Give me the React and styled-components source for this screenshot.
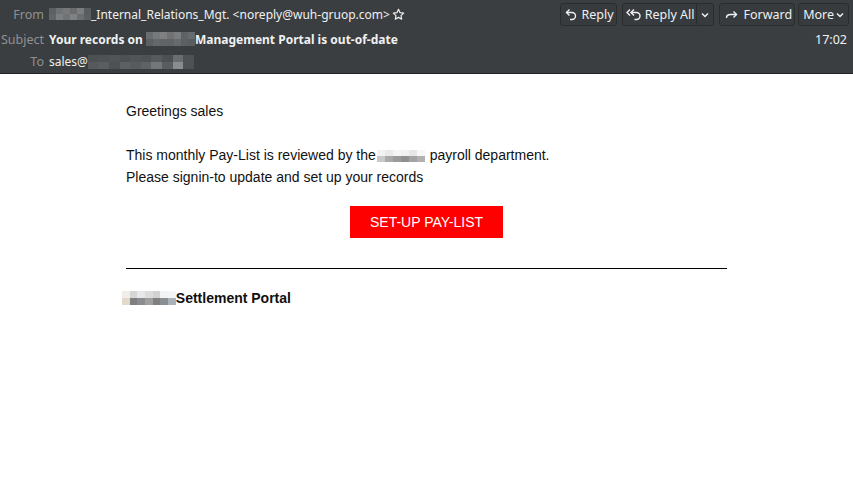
import React from 'react'
import styled, { createGlobalStyle } from 'styled-components'

const GlobalStyle = createGlobalStyle`
    html, body {
        margin: 0;
        padding: 0;
        background: #ffffff;
    }
    #root {
        min-height: 504px;
    }
`

const Page = styled.div`
    width: 100%;
    min-height: 504px;
    background: #ffffff;
`

const Header = styled.header`
    display: grid;
    grid-template-columns: 44px 1fr auto;
    grid-template-rows: 28px 22px 23px;
    column-gap: 5px;
    align-items: center;
    height: 73px;
    padding-right: 4px;
    background-color: #3b3e40;
    border-bottom: 1px solid #232527;
    font-family: 'Noto Sans', sans-serif;
    font-size: 12px;
    color: #eff0f1;
`

const Label = styled.span`
    text-align: right;
    color: #8f9294;
    white-space: nowrap;
    font-size: 12.5px;
`

const Value = styled.span`
    display: flex;
    align-items: center;
    white-space: nowrap;
    font-weight: ${p => (p.$bold ? 700 : 400)};
`

const Toolbar = styled.div`
    display: flex;
    align-items: center;
    gap: 5px;
    align-self: start;
    margin-top: 3px;
`

const Group = styled.div`
    display: flex;
`

const Button = styled.button`
    display: flex;
    align-items: center;
    gap: ${p => (p.$gap !== undefined ? p.$gap : 5)}px;
    height: 23px;
    padding: 0 ${p => p.$padR ?? 4}px 0 ${p => p.$padL ?? 5}px;
    background: #383b3d;
    border: 1px solid #2a2c2e;
    border-radius: ${p => p.$radius || '3px'};
    color: #eff0f1;
    font-family: 'Noto Sans', sans-serif;
    font-size: 12.5px;
    cursor: pointer;
`

const Time = styled.span`
    text-align: right;
    padding-right: 2px;
    font-size: 12.5px;
`

const Mosaic = styled.span`
    display: inline-grid;
    grid-template-columns: repeat(${p => p.$cols}, ${p => p.$w}px);
    grid-auto-rows: ${p => p.$h}px;
    margin: 0 ${p => p.$gap || 0}px;
    vertical-align: middle;
`

const Cell = styled.span`
    background: ${p => p.$c};
`

const Body = styled.main`
    width: 601px;
    margin: 0 auto;
    padding-top: 26px;
    font-family: 'Liberation Sans', Arial, sans-serif;
    font-size: 14px;
    line-height: 22px;
    color: #111111;
`

const Para = styled.p`
    margin: 0 0 22px 0;
`

const CtaWrap = styled.div`
    display: flex;
    justify-content: center;
    margin-top: -4px;
`

const Cta = styled.a`
    display: block;
    width: 153px;
    height: 32px;
    line-height: 32px;
    background: #ff0000;
    color: #ffffff;
    text-align: center;
    text-decoration: none;
    font-size: 14px;
`

const Rule = styled.hr`
    border: none;
    border-top: 1px solid #000000;
    margin: 30px 0 0 0;
`

const Signature = styled.div`
    display: flex;
    align-items: center;
    margin-top: 18px;
    margin-left: -4px;
    font-weight: 700;
`

const Blur = ({ rows, w, h, gap }) => (
    <Mosaic $cols={rows[0].length} $w={w} $h={h} $gap={gap}>
        {rows.flat().map((c, i) => (
            <Cell key={i} $c={c} />
        ))}
    </Mosaic>
)

const ReplyIcon = () => (
    <svg width="12" height="13" viewBox="0 0 12 13" fill="none" stroke="#eff0f1" strokeWidth="1.4">
        <path d="M4.5 1.5 L1.5 4.5 L4.5 7.5" />
        <path d="M1.5 4.5 H7 A3.5 3.5 0 0 1 7 11.5 H5" />
    </svg>
)

const ReplyAllIcon = () => (
    <svg width="16" height="13" viewBox="0 0 16 13" fill="none" stroke="#eff0f1" strokeWidth="1.4">
        <path d="M4 1.5 L1 4.5 L4 7.5" />
        <path d="M8 1.5 L5 4.5 L8 7.5" />
        <path d="M5 4.5 H10.5 A3.5 3.5 0 0 1 10.5 11.5 H8.5" />
    </svg>
)

const ForwardIcon = () => (
    <svg width="13" height="13" viewBox="0 0 13 13" fill="none" stroke="#eff0f1" strokeWidth="1.4">
        <path d="M1.5 10 Q1.5 6.5 5.5 6.5 H11.5" />
        <path d="M8.5 3.5 L11.5 6.5 L8.5 9.5" />
    </svg>
)

const Chevron = () => (
    <svg width="10" height="10" viewBox="0 0 10 10" fill="none" stroke="#eff0f1" strokeWidth="1.5">
        <path d="M2 3.5 L5 6.5 L8 3.5" />
    </svg>
)

const Star = () => (
    <svg width="13" height="13" viewBox="0 0 24 24" fill="none" stroke="#eff0f1" strokeWidth="2.2" strokeLinejoin="round">
        <path d="M12 2.5 L14.9 8.6 L21.5 9.4 L16.6 14 L17.9 20.6 L12 17.3 L6.1 20.6 L7.4 14 L2.5 9.4 L9.1 8.6 Z" />
    </svg>
)

const fromBlur = [
    ['#5d6062', '#6f7274', '#767879', '#6a6d6f', '#7b7d7f', '#595c5e'],
    ['#626567', '#7c7e80', '#717375', '#7f8183', '#6c6e70', '#5c5f61'],
]
const subjectBlur = [
    ['#6a6d6f', '#76797b', '#7e8082', '#6f7173', '#7a7c7e', '#5f6264', '#686b6d'],
    ['#5c5f61', '#65686a', '#616466', '#606365', '#67696b', '#5d6062', '#5a5d5f'],
]
const toBlur = [
    ['#4d5052', '#4f5254', '#515456', '#4e5153', '#525557', '#4f5254', '#575a5c', '#4d5052', '#6a6d6f', '#4f5254'],
    ['#56595b', '#5b5e60', '#4e5153', '#5d6063', '#585b5d', '#5f6264', '#747779', '#5a5d5f', '#8a8c8e', '#4e5153'],
]
const bodyBlur = [
    ['#f2f2f2', '#eaeaea', '#f5f5f5', '#f0f0f0', '#e6e6e6', '#f7f7f7'],
    ['#c9c9c9', '#a9a9a9', '#9b9b9b', '#8f8f8f', '#a3a3a3', '#b1b1b1'],
]
const sigBlur = [
    ['#f1eeea', '#d6d6d6', '#e6e8ec', '#dcdcdc', '#d2d2d2', '#f2f3f5', '#f4f5f6'],
    ['#e2d8cc', '#7f7f7f', '#8a8c8f', '#a0a0a0', '#808080', '#8c8e90', '#aab2ba'],
]

const App = () => {
    return (
        <Page>
            <GlobalStyle />
            <Header>
                <Label>From</Label>
                <Value>
                    <Blur rows={fromBlur} w={7} h={6} />
                    _Internal_Relations_Mgt. &lt;noreply@wuh-gruop.com&gt;
                    <span style={{ width: 2 }} />
                    <Star />
                </Value>
                <Toolbar>
                    <Button $gap={5} $padL={4} $padR={2}>
                        <ReplyIcon />
                        Reply
                    </Button>
                    <Group>
                        <Button $radius="3px 0 0 3px" $gap={3} $padL={3} $padR={2}>
                            <ReplyAllIcon />
                            Reply All
                        </Button>
                        <Button $radius="0 3px 3px 0" $padL={3} $padR={3} style={{ borderLeft: 'none' }}>
                            <Chevron />
                        </Button>
                    </Group>
                    <Button $gap={5} $padL={5} $padR={2}>
                        <ForwardIcon />
                        Forward
                    </Button>
                    <Button $gap={1} $padL={4} $padR={3} style={{ marginLeft: -2 }}>
                        More
                        <Chevron />
                    </Button>
                </Toolbar>

                <Label>Subject</Label>
                <Value $bold>
                    Your records on&nbsp;
                    <Blur rows={subjectBlur} w={7} h={7} />
                    Management Portal is out-of-date
                </Value>
                <Time>17:02</Time>

                <Label>To</Label>
                <Value>
                    sales@
                    <Blur rows={toBlur} w={10.6} h={7} />
                </Value>
                <span />
            </Header>

            <Body>
                <Para>Greetings sales</Para>
                <Para>
                    This monthly Pay-List is reviewed by the
                    <Blur rows={bodyBlur} w={8} h={6} gap={1} />
                    &nbsp;payroll department.
                    <br />
                    Please signin-to update and set up your records
                </Para>
                <CtaWrap>
                    <Cta href="#">SET-UP PAY-LIST</Cta>
                </CtaWrap>
                <Rule />
                <Signature>
                    <Blur rows={sigBlur} w={7.7} h={7} />
                    Settlement Portal
                </Signature>
            </Body>
        </Page>
    )
}

export default App
